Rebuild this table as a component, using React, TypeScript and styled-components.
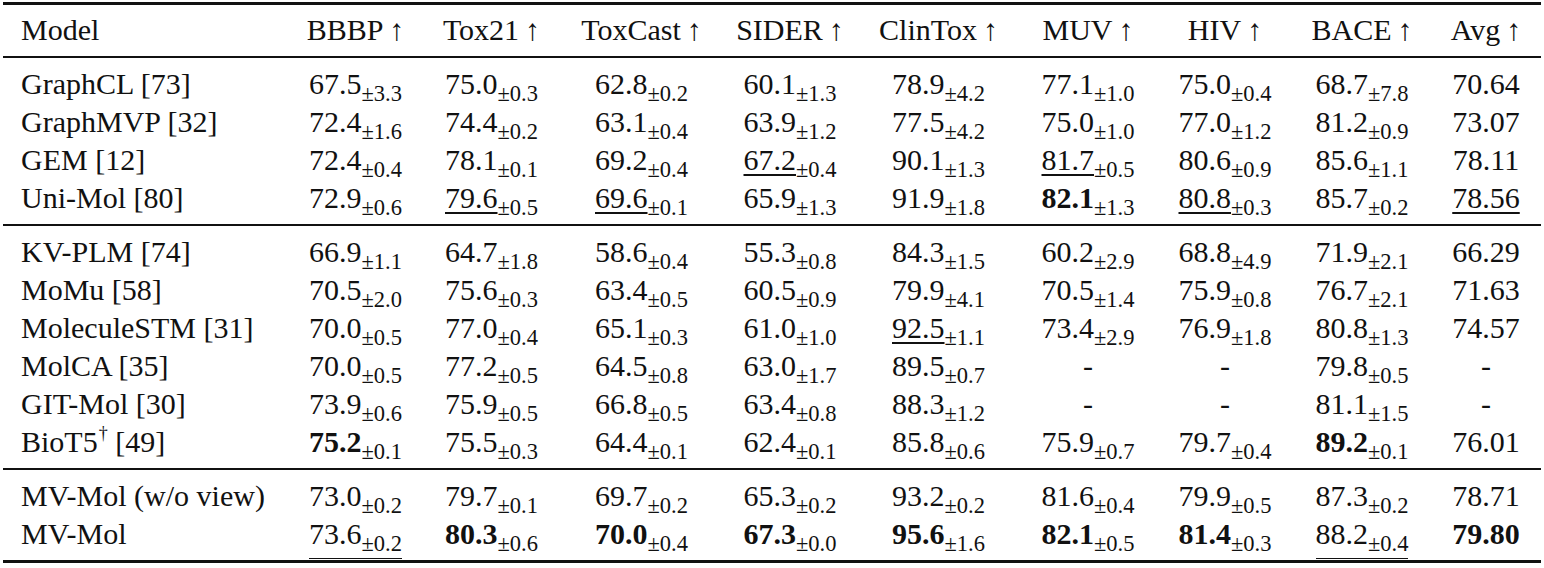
import React from 'react';
import styled, { createGlobalStyle } from 'styled-components';

// Column widths, measured from the reference (table starts at x=3)
const COLUMNS = '286px 133px 139px 161px 136px 161px 138px 136px 138px 110px';

const HEADERS = ['BBBP', 'Tox21', 'ToxCast', 'SIDER', 'ClinTox', 'MUV', 'HIV', 'BACE', 'Avg'];

// Cell notation: "67.5±3.3" plain, "b:" bold number, "u:" underlined number,
// "U:" underline under number and deviation, "-" missing
interface ModelRow {
    name: string;
    dagger?: boolean;
    cite?: string;
    cells: string[];
}

const GROUPS: ModelRow[][] = [
    [
        { name: 'GraphCL', cite: '73', cells: ['67.5±3.3', '75.0±0.3', '62.8±0.2', '60.1±1.3', '78.9±4.2', '77.1±1.0', '75.0±0.4', '68.7±7.8', '70.64'] },
        { name: 'GraphMVP', cite: '32', cells: ['72.4±1.6', '74.4±0.2', '63.1±0.4', '63.9±1.2', '77.5±4.2', '75.0±1.0', '77.0±1.2', '81.2±0.9', '73.07'] },
        { name: 'GEM', cite: '12', cells: ['72.4±0.4', '78.1±0.1', '69.2±0.4', 'u:67.2±0.4', '90.1±1.3', 'u:81.7±0.5', '80.6±0.9', '85.6±1.1', '78.11'] },
        { name: 'Uni-Mol', cite: '80', cells: ['72.9±0.6', 'u:79.6±0.5', 'u:69.6±0.1', '65.9±1.3', '91.9±1.8', 'b:82.1±1.3', 'u:80.8±0.3', '85.7±0.2', 'u:78.56'] },
    ],
    [
        { name: 'KV-PLM', cite: '74', cells: ['66.9±1.1', '64.7±1.8', '58.6±0.4', '55.3±0.8', '84.3±1.5', '60.2±2.9', '68.8±4.9', '71.9±2.1', '66.29'] },
        { name: 'MoMu', cite: '58', cells: ['70.5±2.0', '75.6±0.3', '63.4±0.5', '60.5±0.9', '79.9±4.1', '70.5±1.4', '75.9±0.8', '76.7±2.1', '71.63'] },
        { name: 'MoleculeSTM', cite: '31', cells: ['70.0±0.5', '77.0±0.4', '65.1±0.3', '61.0±1.0', 'u:92.5±1.1', '73.4±2.9', '76.9±1.8', '80.8±1.3', '74.57'] },
        { name: 'MolCA', cite: '35', cells: ['70.0±0.5', '77.2±0.5', '64.5±0.8', '63.0±1.7', '89.5±0.7', '-', '-', '79.8±0.5', '-'] },
        { name: 'GIT-Mol', cite: '30', cells: ['73.9±0.6', '75.9±0.5', '66.8±0.5', '63.4±0.8', '88.3±1.2', '-', '-', '81.1±1.5', '-'] },
        { name: 'BioT5', dagger: true, cite: '49', cells: ['b:75.2±0.1', '75.5±0.3', '64.4±0.1', '62.4±0.1', '85.8±0.6', '75.9±0.7', '79.7±0.4', 'b:89.2±0.1', '76.01'] },
    ],
    [
        { name: 'MV-Mol (w/o view)', cells: ['73.0±0.2', '79.7±0.1', '69.7±0.2', '65.3±0.2', '93.2±0.2', '81.6±0.4', '79.9±0.5', '87.3±0.2', '78.71'] },
        { name: 'MV-Mol', cells: ['U:73.6±0.2', 'b:80.3±0.6', 'b:70.0±0.4', 'b:67.3±0.0', 'b:95.6±1.6', 'b:82.1±0.5', 'b:81.4±0.3', 'U:88.2±0.4', 'b:79.80'] },
    ],
];

const GlobalStyle = createGlobalStyle`
    html, body {
        margin: 0;
        padding: 0;
        background: #ffffff;
    }
    body {
        font-family: "Liberation Serif", "Times New Roman", serif;
        color: #111111;
    }
`;

const Page = styled.div`
    padding: 2px 3px 0;
`;

const Table = styled.div`
    width: 1538px;
    display: flex;
    flex-direction: column;
`;

const Rule = styled.div<{ $pos: 'top' | 'mid' | 'bottom' }>`
    height: ${p => (p.$pos === 'mid' ? 2 : 3)}px;
    background: #111111;
    margin-top: ${p => (p.$pos === 'top' ? 0 : 7)}px;
    margin-bottom: ${p => (p.$pos === 'bottom' ? 0 : p.$pos === 'top' ? 6 : 7)}px;
`;

const Row = styled.div`
    display: grid;
    grid-template-columns: ${COLUMNS};
    height: 38px;
    line-height: 38px;
    font-size: 30px;
    white-space: nowrap;
`;

const NameCell = styled.div`
    padding-left: 18px;
`;

const Cell = styled.div`
    text-align: center;
`;

const Num = styled.span<{ $bold?: boolean; $under?: boolean }>`
    font-weight: ${p => (p.$bold ? 700 : 400)};
    text-decoration: ${p => (p.$under ? 'underline' : 'none')};
    text-decoration-thickness: 1.5px;
    text-underline-offset: 4px;
`;

const FullUnder = styled.span`
    display: inline-block;
    line-height: 30px;
    padding-bottom: 3px;
    border-bottom: 1.5px solid #111111;
`;

const Dev = styled.sub`
    font-size: 0.75em;
    line-height: 1;
    vertical-align: -0.3em;
    font-weight: 400;
`;

const Dagger = styled.sup`
    font-size: 0.6em;
    line-height: 1;
    vertical-align: 0.75em;
    margin-left: 1px;
`;

const Arrow = styled.span`
    margin-left: 6px;
`;

const Value: React.FC<{ raw: string }> = ({ raw }) => {
    if (raw === '-') return <>-</>;
    let mode = '';
    let text = raw;
    if (/^[buU]:/.test(raw)) {
        mode = raw[0];
        text = raw.slice(2);
    }
    const [num, dev] = text.split('±');
    const body = (
        <>
            <Num $bold={mode === 'b'} $under={mode === 'u'}>{num}</Num>
            {dev && <Dev>±{dev}</Dev>}
        </>
    );
    return mode === 'U' ? <FullUnder>{body}</FullUnder> : body;
};

export default function App() {
    return (
        <Page>
            <GlobalStyle />
            <Table>
                <Rule $pos="top" />
                <Row>
                    <NameCell>Model</NameCell>
                    {HEADERS.map(h => (
                        <Cell key={h}>
                            {h}
                            <Arrow>↑</Arrow>
                        </Cell>
                    ))}
                </Row>
                {GROUPS.map((group, gi) => (
                    <React.Fragment key={gi}>
                        <Rule $pos="mid" />
                        {group.map(row => (
                            <Row key={row.name}>
                                <NameCell>
                                    {row.name}
                                    {row.dagger && <Dagger>†</Dagger>}
                                    {row.cite && ` [${row.cite}]`}
                                </NameCell>
                                {row.cells.map((c, ci) => (
                                    <Cell key={ci}>
                                        <Value raw={c} />
                                    </Cell>
                                ))}
                            </Row>
                        ))}
                    </React.Fragment>
                ))}
                <Rule $pos="bottom" />
            </Table>
        </Page>
    );
}
